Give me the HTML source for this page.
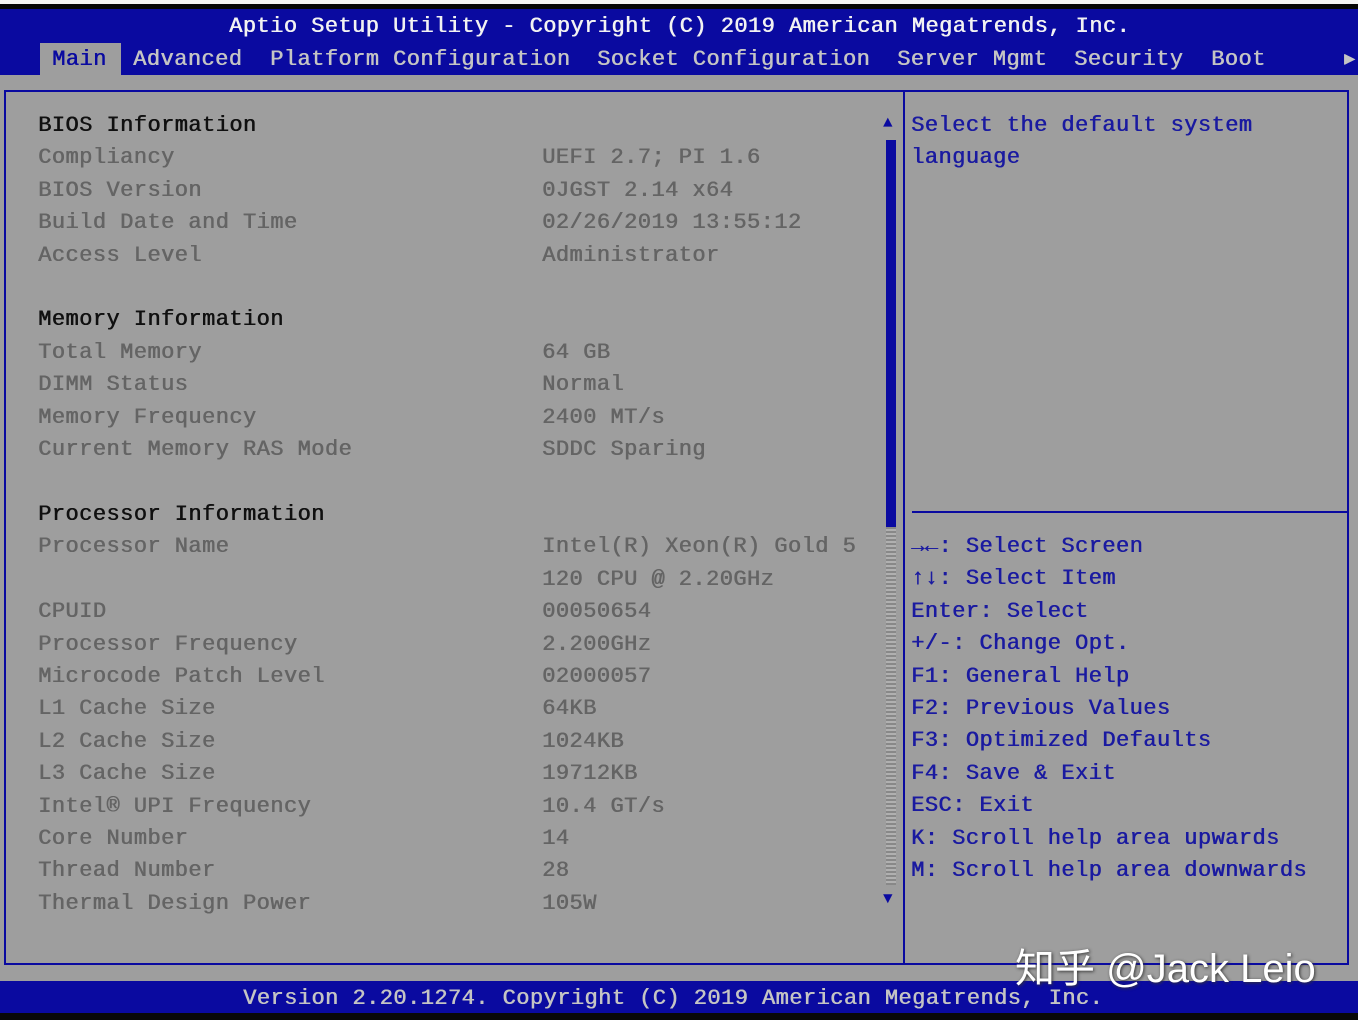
<!DOCTYPE html>
<html><head><meta charset="utf-8"><style>
*{margin:0;padding:0}
body{width:1358px;height:1020px;background:#9e9e9e;position:relative;overflow:hidden;font-family:"Liberation Mono",monospace;font-size:22px;letter-spacing:0.45px}
.t{position:absolute;white-space:pre;line-height:32.4px;text-shadow:0.6px 0 0 currentColor}
#top{position:absolute;left:0;top:0;width:1358px;height:75px;background:#0a0aa0;border-top:4px solid #f4f4f4;box-sizing:border-box}
#topk{position:absolute;left:0;top:4px;width:1358px;height:5px;background:#050505}
#bot{position:absolute;left:0;top:981px;width:1358px;height:33px;background:#0a0aa0}
#botk{position:absolute;left:0;top:1013px;width:1358px;height:7px;background:#080808}
.tab{position:absolute;top:44px;color:#c4c4c4;line-height:32px;white-space:pre;text-shadow:0.6px 0 0 currentColor}
</style></head><body>
<div id="top"></div><div id="topk"></div>
<div class="t" style="left:229px;top:11px;color:#f2f2f2">Aptio Setup Utility - Copyright (C) 2019 American Megatrends, Inc.</div>
<div style="position:absolute;left:40px;top:43px;width:81px;height:32px;background:#9e9e9e"></div>
<div class="tab" style="left:52px;color:#0a0aa0">Main</div>
<div class="tab" style="left:133px">Advanced</div>
<div class="tab" style="left:270px">Platform Configuration</div>
<div class="tab" style="left:597px">Socket Configuration</div>
<div class="tab" style="left:897px">Server Mgmt</div>
<div class="tab" style="left:1074px">Security</div>
<div class="tab" style="left:1211px">Boot</div>
<div class="tab" style="left:1344px;font-size:18px">&#9654;</div>

<div style="position:absolute;left:4px;top:90px;width:1345px;height:875px;border:2px solid #0a0aa0;box-sizing:border-box"></div>
<div style="position:absolute;left:903px;top:90px;width:2px;height:875px;background:#0a0aa0"></div>
<div style="position:absolute;left:912px;top:511px;width:436px;height:2px;background:#0a0aa0"></div>

<div class="t" style="left:38px;top:110px;color:#646464"><span style="color:#101010">BIOS Information</span>
Compliancy
BIOS Version
Build Date and Time
Access Level

<span style="color:#101010">Memory Information</span>
Total Memory
DIMM Status
Memory Frequency
Current Memory RAS Mode

<span style="color:#101010">Processor Information</span>
Processor Name

CPUID
Processor Frequency
Microcode Patch Level
L1 Cache Size
L2 Cache Size
L3 Cache Size
Intel® UPI Frequency
Core Number
Thread Number
Thermal Design Power</div>
<div class="t" style="left:542px;top:110px;color:#646464">
UEFI 2.7; PI 1.6
0JGST 2.14 x64
02/26/2019 13:55:12
Administrator


64 GB
Normal
2400 MT/s
SDDC Sparing


Intel(R) Xeon(R) Gold 5
120 CPU @ 2.20GHz
00050654
2.200GHz
02000057
64KB
1024KB
19712KB
10.4 GT/s
14
28
105W</div>

<div style="position:absolute;left:883px;top:114px;color:#0a0aa0;font-size:16px">&#9650;</div>
<div style="position:absolute;left:886px;top:140px;width:10px;height:387px;background:#0a0aa0"></div>
<div style="position:absolute;left:886px;top:527px;width:10px;height:358px;background:repeating-linear-gradient(0deg,#888 0 2px,#b0b0b0 2px 4px)"></div>
<div style="position:absolute;left:883px;top:890px;color:#0a0aa0;font-size:16px">&#9660;</div>

<div class="t" style="left:911px;top:110px;color:#1a1aa0">Select the default system
language</div>
<div class="t" style="left:911px;top:531px;color:#1a1aa0"><b>→←</b>: Select Screen
<b>↑↓</b>: Select Item
Enter: Select
+/-: Change Opt.
F1: General Help
F2: Previous Values
F3: Optimized Defaults
F4: Save &amp; Exit
ESC: Exit
K: Scroll help area upwards
M: Scroll help area downwards</div>

<div id="bot"></div><div id="botk"></div>
<div class="t" style="left:243px;top:983px;color:#c4c4c4">Version 2.20.1274. Copyright (C) 2019 American Megatrends, Inc.</div>

<div style="position:absolute;left:1015px;top:936px;color:#fff;font-family:'Liberation Sans','Noto Sans CJK SC',sans-serif;font-size:40px;letter-spacing:0;white-space:pre;text-shadow:1px 1px 3px #333">知乎 @Jack Leio</div>
</body></html>
